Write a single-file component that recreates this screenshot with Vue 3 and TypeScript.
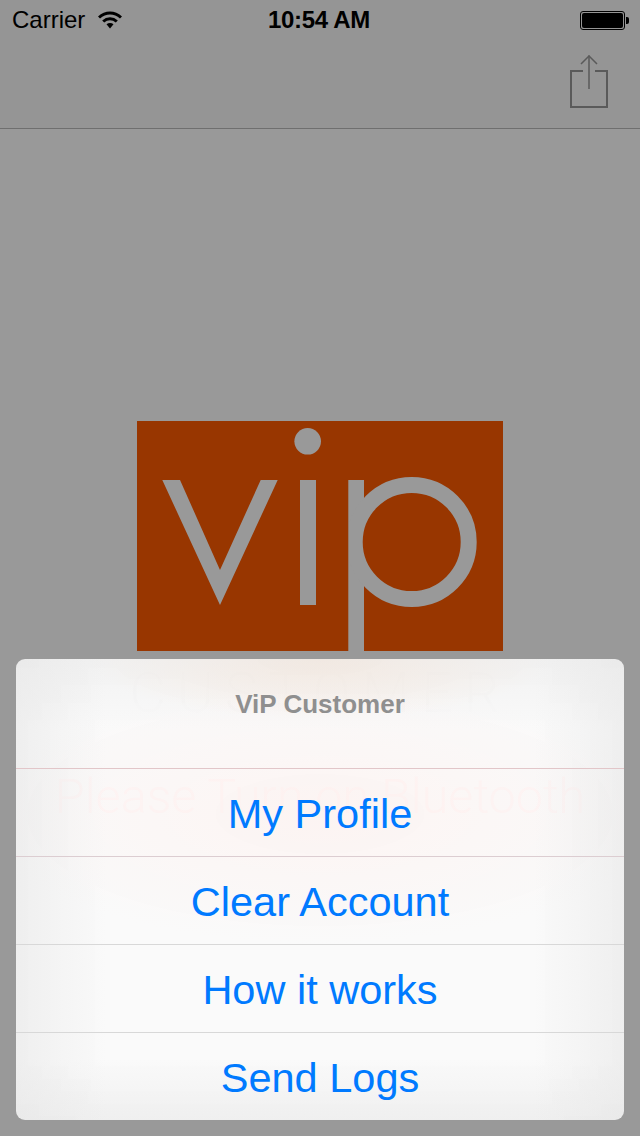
<script setup lang="ts">
const menuItems: string[] = ['My Profile', 'Clear Account', 'How it works', 'Send Logs'];
</script>

<template>
    <div class="screen">
        <div class="top-bar">
            <div class="status-bar">
                <div class="status-left">
                    <span>Carrier</span>
                    <svg class="wifi" width="24" height="18" viewBox="0 0 24 18">
                        <path d="M1 6.500C7.500 0.500 16.500 0.500 23 6.500" fill="none" stroke="#000" stroke-width="3" />
                        <path d="M5.200 10.500C9.200 6.800 14.800 6.800 18.800 10.500" fill="none" stroke="#000" stroke-width="3" />
                        <path d="M8.500 13.300L12 17.500L15.500 13.300C13.500 11.500 10.500 11.500 8.500 13.300Z" fill="#000" />
                    </svg>
                </div>
                <span class="time">10:54 AM</span>
                <div class="status-right">
                    <div class="battery"><div class="battery-fill"></div></div>
                    <div class="battery-nub"></div>
                </div>
            </div>
            <div class="nav-bar">
                <svg width="38" height="54" viewBox="0 0 38 54">
                    <path d="M13 16H1V52H37V16H25" fill="none" stroke="#5a5a5a" stroke-width="2" />
                    <path d="M19 0.500V34" fill="none" stroke="#5a5a5a" stroke-width="1.500" />
                    <path d="M11 9L19 1L27 9" fill="none" stroke="#5a5a5a" stroke-width="1.500" />
                </svg>
            </div>
        </div>

        <div class="content">
            <svg class="logo" width="366" height="230" viewBox="0 0 366 230">
                <defs>
                    <clipPath id="bowl-clip"><rect x="212" y="0" width="154" height="230" /></clipPath>
                </defs>
                <rect width="366" height="230" fill="#983600" />
                <circle cx="170.700" cy="20.300" r="13.300" fill="#999" />
                <rect x="163" y="59" width="16" height="125" fill="#999" />
                <path d="M25.300 59H43L83 149L123.700 59H140.700L83 184Z" fill="#999" />
                <rect x="211.300" y="59" width="15.700" height="171" fill="#999" />
                <circle cx="274.700" cy="121" r="57" fill="#983600" stroke="#999" stroke-width="16" clip-path="url(#bowl-clip)" />
            </svg>
            <div class="customer">CUSTOMER</div>
            <div class="bluetooth">Please Turn on Bluetooth</div>
        </div>

        <div class="sheet">
            <div class="sheet-title">ViP Customer</div>
            <div v-for="item in menuItems" :key="item" class="sheet-row">{{ item }}</div>
        </div>
    </div>
</template>

<style scoped>
.screen {
    position: relative;
    width: 640px;
    height: 1136px;
    overflow: hidden;
    background: #999;
    font-family: "Liberation Sans", Arial, sans-serif;
}

.top-bar {
    height: 128px;
    background: #959595;
    border-bottom: 1px solid #6f6f6f;
}

.status-bar {
    display: grid;
    grid-template-columns: 1fr auto 1fr;
    align-items: center;
    height: 40px;
    padding: 0 11px 0 12px;
    color: #000;
    font-size: 24px;
}

.status-left {
    display: flex;
    align-items: center;
    gap: 13px;
}

.wifi {
    margin-top: -1px;
}

.time {
    margin-left: -3px;
    font-weight: bold;
    letter-spacing: -0.3px;
}

.status-right {
    display: flex;
    align-items: center;
    justify-content: flex-end;
}

.battery {
    box-sizing: border-box;
    width: 45px;
    height: 19px;
    padding: 1px;
    border: 1px solid #000;
    border-radius: 3px;
}

.battery-fill {
    height: 100%;
    background: #000;
    border-radius: 2px;
}

.battery-nub {
    width: 3px;
    height: 7px;
    margin-left: 1px;
    background: #000;
    border-radius: 0 2px 2px 0;
}

.nav-bar {
    display: flex;
    justify-content: flex-end;
    padding: 15px 32px 0 0;
}

.content {
    display: flex;
    flex-direction: column;
    align-items: center;
    padding-top: 292px;
}

.logo {
    display: block;
}

.customer {
    margin-top: 9px;
    color: #666;
    font-family: Roboto, "Liberation Sans", sans-serif;
    font-size: 56px;
    font-weight: 300;
    line-height: 66px;
    letter-spacing: 11px;
    white-space: nowrap;
}

.bluetooth {
    margin-top: 43px;
    color: #e00000;
    font-family: Roboto, "Liberation Sans", sans-serif;
    font-size: 48.500px;
    font-weight: 300;
    line-height: 55px;
    white-space: nowrap;
}

.sheet {
    position: absolute;
    left: 16px;
    right: 16px;
    bottom: 16px;
    overflow: hidden;
    border-radius: 9px;
    background:
        linear-gradient(to right, rgba(228, 228, 228, 0.5), rgba(228, 228, 228, 0) 90px, rgba(228, 228, 228, 0) calc(100% - 90px), rgba(228, 228, 228, 0.5)),
        linear-gradient(to bottom, rgba(232, 232, 232, 0.5), rgba(232, 232, 232, 0) 70px, rgba(232, 232, 232, 0) calc(100% - 60px), rgba(232, 232, 232, 0.6)),
        radial-gradient(ellipse 230px 60px at 50% 0, rgba(250, 222, 200, 0.6), rgba(250, 222, 200, 0)),
        radial-gradient(ellipse 340px 130px at 50% 155px, rgba(255, 236, 232, 0.45), rgba(255, 236, 232, 0)),
        rgba(253, 253, 253, 0.97);
}

.sheet-title {
    box-sizing: border-box;
    height: 109px;
    padding-top: 30px;
    color: #8f8f8f;
    font-size: 26px;
    font-weight: bold;
    line-height: 30px;
    text-align: center;
}

.sheet-row {
    box-sizing: border-box;
    height: 88px;
    border-top: 1px solid #d8d8d8;
    color: #007aff;
    font-size: 41.500px;
    line-height: 90px;
    text-align: center;
}

.sheet-row:nth-child(2) {
    border-top-color: #e2c6c9;
}

.sheet-row:nth-child(3) {
    border-top-color: #dccdd1;
}
</style>

<style>
body {
    background: #999;
}
</style>
